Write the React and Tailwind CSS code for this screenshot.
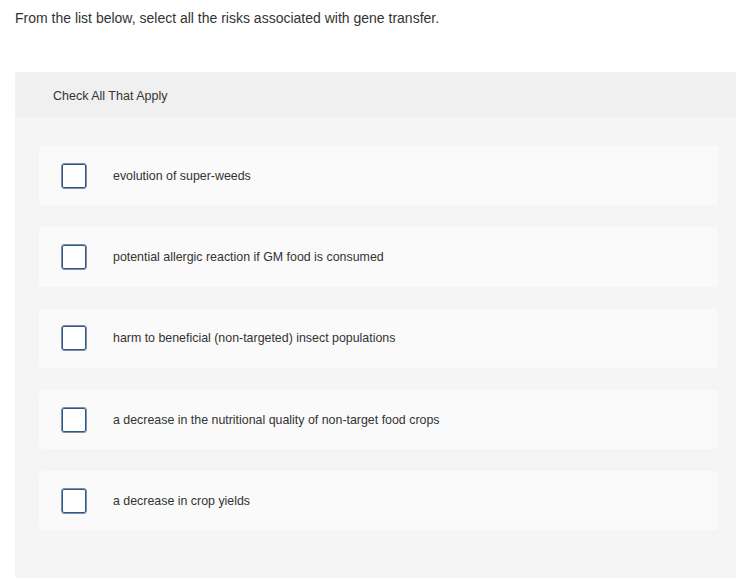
import React from "react";

const options = [
  "evolution of super-weeds",
  "potential allergic reaction if GM food is consumed",
  "harm to beneficial (non-targeted) insect populations",
  "a decrease in the nutritional quality of non-target food crops",
  "a decrease in crop yields",
];

export default function App() {
  return (
    <div className="w-[736px] h-[580px] bg-white overflow-hidden text-[#333]" style={{ fontFamily: '"Liberation Sans", Arial, sans-serif' }}>
      <div className="pl-[15px] pt-[10px] text-[14px] leading-[16px]">
        From the list below, select all the risks associated with gene transfer.
      </div>
      <div className="ml-[15px] mt-[46px] h-[506px] bg-[#f5f5f5] rounded-l-[3px] overflow-hidden">
        <div className="h-[45px] bg-[#f0f0f0] pl-[38px] pt-[3px] flex items-center text-[12.5px]">
          Check All That Apply
        </div>
        <div className="pt-[29px] pl-[24px] pr-[18px] flex flex-col gap-[22px]">
          {options.map((o) => (
            <div key={o} className="h-[59.3px] bg-[#fafafa] rounded-[4px] flex items-center pl-[22px]">
              <div className="w-[26px] h-[26px] rounded-[3px] border border-[#8a8d99] p-0">
                <div className="w-full h-full rounded-[2px] border-[1.5px] border-[#225a92] bg-white" />
              </div>
              <span className="ml-[26px] text-[12.4px] leading-[14px]">{o}</span>
            </div>
          ))}
        </div>
      </div>
    </div>
  );
}
